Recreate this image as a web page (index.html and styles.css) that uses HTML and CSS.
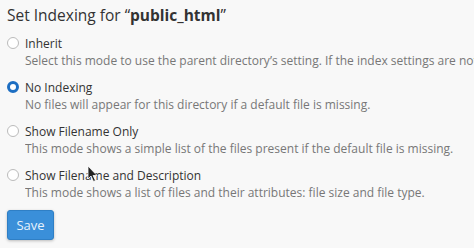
FILE: index.html
```html
<!DOCTYPE html>
<html>
<head>
<meta charset="utf-8">
<link rel="stylesheet" href="styles.css">
</head>
<body>
<div class="page">
  <h1 class="title">Set Indexing for “<b>public_html</b>”</h1>
  <div class="opt">
    <label class="row"><span class="radio"></span><span class="label">Inherit</span></label>
    <div class="desc">Select this mode to use the parent directory’s setting. If the index settings are not defined for the parent directory, the system uses its default settings.</div>
  </div>
  <div class="opt">
    <label class="row"><span class="radio on"></span><span class="label">No Indexing</span></label>
    <div class="desc">No files will appear for this directory if a default file is missing.</div>
  </div>
  <div class="opt">
    <label class="row"><span class="radio"></span><span class="label">Show Filename Only</span></label>
    <div class="desc">This mode shows a simple list of the files present if the default file is missing.</div>
  </div>
  <div class="opt">
    <label class="row"><span class="radio"></span><span class="label">Show Filename and Description</span></label>
    <div class="desc">This mode shows a list of files and their attributes: file size and file type.</div>
  </div>
  <button class="save">Save</button>
  <svg class="cursor" width="12" height="18" viewBox="0 0 12 18"><path d="M1 1 L1 14 L4 11 L6.5 16.5 L8.5 15.5 L6 10.5 L10 10.5 Z" fill="#222" stroke="#fff" stroke-width="0.8"/></svg>
</div>
</body>
</html>
```
FILE: styles.css
```css
html, body { margin: 0; padding: 0; }
body {
  width: 474px; height: 248px; overflow: hidden;
  background: #f8f8f8;
  font-family: "Open Sans", "Liberation Sans", sans-serif;
  color: #333;
}
.page { position: relative; padding: 3px 0 0 7px; }
.title { margin: 0 0 7px 0; font-size: 15.5px; font-weight: 400; line-height: 24px; color: #333; white-space: nowrap; }
.title b { font-weight: 700; }
.opt { margin-bottom: 8px; }
.row { display: flex; align-items: center; gap: 6px; height: 18px; }
.radio {
  width: 10px; height: 10px; border: 1px solid #bbb; border-radius: 50%;
  background: #fff; flex: none;
}
.radio.on { width: 6px; height: 6px; border: 3px solid #1d6ec2; }
.label { font-size: 12px; color: #333; }
.desc { margin-left: 18px; font-size: 12px; line-height: 18px; color: #777; white-space: nowrap; overflow: hidden; }
.save {
  margin-top: 5px; display: block;
  width: 47px; height: 30px; border: 1px solid #2f7fc5; border-radius: 3px;
  background: #3a8fd9; color: #e8f2fc; font-family: inherit; font-size: 13px; padding: 0;
  box-shadow: 0 1px 3px rgba(0,0,0,0.25);
}
.cursor { position: absolute; left: 87px; top: 165px; }
```
